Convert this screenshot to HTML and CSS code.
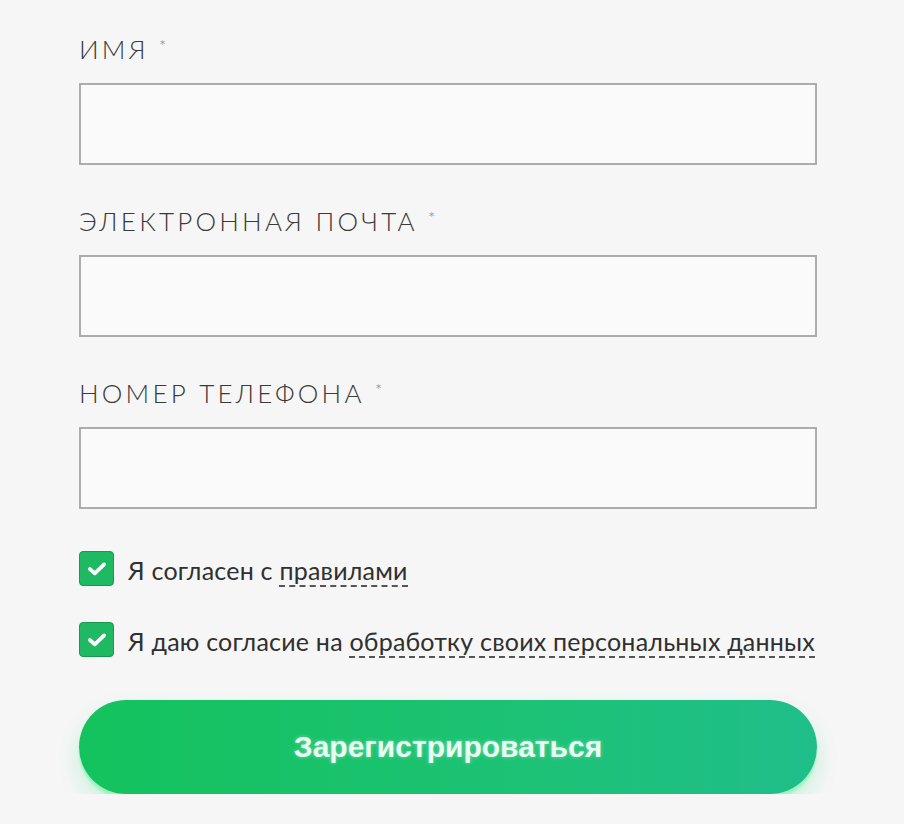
FILE: index.html
```html
<!DOCTYPE html>
<html lang="ru">
<head>
<meta charset="utf-8">
<title>Регистрация</title>
<link rel="stylesheet" href="styles.css">
</head>
<body>
<form class="form">
  <div class="field">
    <label class="label">Имя <span class="req">*</span></label>
    <input class="input" type="text">
  </div>
  <div class="field">
    <label class="label">Электронная почта <span class="req">*</span></label>
    <input class="input" type="email">
  </div>
  <div class="field">
    <label class="label">Номер телефона <span class="req">*</span></label>
    <input class="input" type="tel">
  </div>
  <div class="checks">
    <label class="check">
      <span class="box"><svg viewBox="0 0 20 20" width="22" height="22"><path d="M3.5 10 L8 14 L16.5 5.8" fill="none" stroke="#fff" stroke-width="3.4" stroke-linecap="round" stroke-linejoin="round"/></svg></span>
      <span class="check-text">Я согласен с <span class="link">правилами</span></span>
    </label>
    <label class="check">
      <span class="box"><svg viewBox="0 0 20 20" width="22" height="22"><path d="M3.5 10 L8 14 L16.5 5.8" fill="none" stroke="#fff" stroke-width="3.4" stroke-linecap="round" stroke-linejoin="round"/></svg></span>
      <span class="check-text">Я даю согласие на <span class="link">обработку своих персональных данных</span></span>
    </label>
  </div>
  <button class="submit" type="button">Зарегистрироваться</button>
</form>
</body>
</html>
```
FILE: styles.css
```css
html, body {
  margin: 0;
  padding: 0;
  background: #f6f6f6;
}

.form {
  width: 738px;
  padding: 31px 0 0 79px;
  display: flex;
  flex-direction: column;
}

.field {
  display: flex;
  flex-direction: column;
  margin-bottom: 38px;
}

.label {
  font-family: "Lato", "Open Sans", sans-serif;
  font-weight: 300;
  font-size: 26px;
  line-height: 32px;
  letter-spacing: 3.2px;
  text-transform: uppercase;
  color: #3a3a3a;
  margin-bottom: 18px;
}

.req {
  font-size: 17px;
  color: #8a8a8a;
  vertical-align: 6px;
  letter-spacing: 0;
}

.input {
  box-sizing: border-box;
  width: 738px;
  height: 82px;
  border: 2px solid #acacac;
  background: #fafafa;
  margin: 0;
  padding: 0 20px;
  outline: none;
}

.checks {
  display: flex;
  flex-direction: column;
  gap: 36px;
  margin-top: 4px;
}

.check {
  display: flex;
  align-items: center;
  gap: 14px;
}

.box {
  box-sizing: border-box;
  width: 35px;
  height: 35px;
  border-radius: 4px;
  background: #1fb863;
  border: 1px solid #169a50;
  display: flex;
  align-items: center;
  justify-content: center;
  flex: none;
}

.check-text {
  font-family: "Lato", "Open Sans", sans-serif;
  font-weight: 400;
  font-size: 25px;
  letter-spacing: 0.22px;
  color: #303030;
  line-height: 32px;
  padding-top: 2px;
}

.link {
  border-bottom: 2px dashed #555;
}

.submit {
  margin-top: 43px;
  width: 738px;
  height: 94px;
  border: none;
  border-radius: 47px;
  background: linear-gradient(90deg, #14c25d 0%, #1cc275 60%, #20be8a 100%);
  box-shadow: 0 4px 2px rgba(110, 245, 170, 0.55), 0 12px 22px rgba(80, 230, 150, 0.3);
  color: #e8fff2;
  font-family: "Liberation Sans", Arial, sans-serif;
  font-weight: 700;
  font-size: 30px;
  letter-spacing: 0;
  text-shadow: 0 0 4px rgba(255, 255, 255, 0.4);
  cursor: pointer;
}
```
